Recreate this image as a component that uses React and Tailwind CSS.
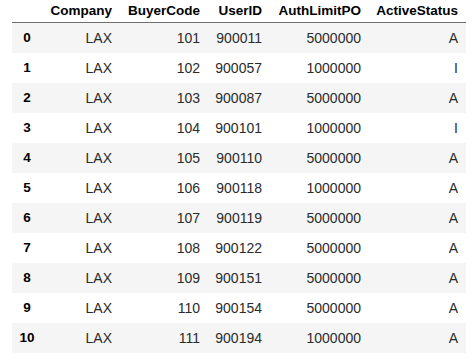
const rows = [
  ["LAX", 101, 900011, 5000000, "A"],
  ["LAX", 102, 900057, 1000000, "I"],
  ["LAX", 103, 900087, 5000000, "A"],
  ["LAX", 104, 900101, 1000000, "I"],
  ["LAX", 105, 900110, 5000000, "A"],
  ["LAX", 106, 900118, 1000000, "A"],
  ["LAX", 107, 900119, 5000000, "A"],
  ["LAX", 108, 900122, 5000000, "A"],
  ["LAX", 109, 900151, 5000000, "A"],
  ["LAX", 110, 900154, 5000000, "A"],
  ["LAX", 111, 900194, 1000000, "A"],
];

const cols = ["Company", "BuyerCode", "UserID", "AuthLimitPO", "ActiveStatus"];

export default function App() {
  return (
    <div
      className="w-[474px] h-[360px] bg-white text-[14px] text-[#2b2b2b] overflow-hidden"
      style={{ fontFamily: "'Liberation Sans', Arial, sans-serif" }}
    >
      <div className="ml-3 w-[454px]">
        {/* header */}
        <div className="grid grid-cols-[30px_78px_88px_62px_99px_97px] h-[23px] items-start pt-[1px] border-b border-[#6e6e6e] font-bold text-[13.5px] text-black">
          <div />
          {cols.map((c) => (
            <div key={c} className="text-right pr-2">{c}</div>
          ))}
        </div>
        {/* body */}
        {rows.map((r, i) => (
          <div
            key={i}
            className={`grid grid-cols-[30px_78px_88px_62px_99px_97px] h-[30px] items-center ${
              i % 2 === 0 ? "bg-[#f5f5f5]" : "bg-white"
            }`}
          >
            <div className="text-center font-bold text-[13.5px] text-black">{i}</div>
            {r.map((v, j) => (
              <div key={j} className="text-right pr-2">{v}</div>
            ))}
          </div>
        ))}
      </div>
    </div>
  );
}
